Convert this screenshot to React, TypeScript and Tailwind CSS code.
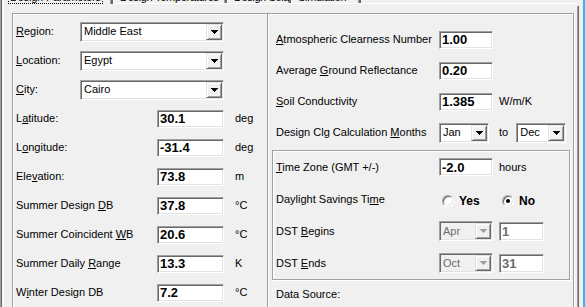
import React from "react";

const sunken =
  "border border-t-[#a0a0a0] border-l-[#a0a0a0] border-b-white border-r-white shadow-[inset_1px_1px_0_#696969,inset_-1px_-1px_0_#e3e3e3]";
const raised =
  "border border-t-[#e3e3e3] border-l-[#e3e3e3] border-b-[#696969] border-r-[#696969] shadow-[inset_1px_1px_0_#fff,inset_-1px_-1px_0_#a0a0a0]";
const tab =
  "shrink-0 overflow-hidden flex items-end border-l border-white border-r-2 border-r-[#696969] shadow-[inset_-1px_0_0_#a0a0a0]";

function Arrow({ disabled }: { disabled?: boolean }) {
  return (
    <svg width="7" height="4" viewBox="0 0 7 4" shapeRendering="crispEdges">
      <path d="M0 0H7V1H6V2H5V3H4V4H3V3H2V2H1V1H0Z" fill={disabled ? "#a0a0a0" : "#000"} />
    </svg>
  );
}

function Combo({ value, className, disabled }: { value: string; className: string; disabled?: boolean }) {
  return (
    <div
      className={`${sunken} ${className} h-[20px] flex items-center justify-between pl-[3px] pr-px ${
        disabled ? "bg-[#f0f0f0] text-[#6d6d6d]" : "bg-white"
      }`}
    >
      <span className="leading-none">{value}</span>
      <div className={`${raised} w-[16px] h-[16px] bg-[#f0f0f0] flex items-center justify-center`}>
        <Arrow disabled={disabled} />
      </div>
    </div>
  );
}

function Field({ value, className, disabled }: { value: string; className: string; disabled?: boolean }) {
  return (
    <div
      className={`${sunken} ${className} h-[18px] bg-white flex items-center pl-[2px] font-bold text-[13px] leading-none ${
        disabled ? "text-[#6d6d6d]" : "text-black"
      }`}
    >
      {value}
    </div>
  );
}

function Radio({ checked, label }: { checked?: boolean; label: string }) {
  return (
    <div className="w-[60px] flex items-center gap-[5px]">
      <div className="w-[12px] h-[12px] rounded-full bg-white border border-t-[#a0a0a0] border-l-[#a0a0a0] border-b-white border-r-white shadow-[inset_1px_1px_0_#696969,inset_-1px_-1px_0_#e3e3e3] flex items-center justify-center">
        {checked && <div className="w-[4px] h-[4px] rounded-full bg-black" />}
      </div>
      <span className="font-bold text-[12px]">{label}</span>
    </div>
  );
}

const U = ({ children }: { children: React.ReactNode }) => (
  <span className="underline underline-offset-1">{children}</span>
);

const leftCombos = [
  { label: <><U>R</U>egion:</>, value: "Middle East" },
  { label: <><U>L</U>ocation:</>, value: "Egypt" },
  { label: <><U>C</U>ity:</>, value: "Cairo" },
];

const leftFields = [
  { label: <>L<U>a</U>titude:</>, value: "30.1", unit: "deg" },
  { label: <>L<U>o</U>ngitude:</>, value: "-31.4", unit: "deg" },
  { label: <>Ele<U>v</U>ation:</>, value: "73.8", unit: "m" },
  { label: <>Summer Design <U>D</U>B</>, value: "37.8", unit: "°C" },
  { label: <>Summer Coincident <U>W</U>B</>, value: "20.6", unit: "°C" },
  { label: <>Summer Daily <U>R</U>ange</>, value: "13.3", unit: "K" },
  { label: <>W<U>i</U>nter Design DB</>, value: "7.2", unit: "°C" },
];

export default function App() {
  return (
    <div className="w-[585px] h-[307px] overflow-hidden bg-[#f0f0f0] flex font-['Liberation_Sans',Arial,sans-serif] text-[11px] text-black">
      {/* left edge of the window behind */}
      <div className="w-[3px] flex">
        <div className="w-px bg-[#a0a0a0]" />
        <div className="w-px bg-[#696969]" />
        <div className="w-px bg-[#f0f0f0]" />
      </div>

      <div className="w-[574px] flex flex-col">
        {/* tab strip, cut off at the top */}
        <div className="h-[7px] flex overflow-hidden">
          <div className={`${tab} w-[110px] pl-[4px]`}>
            <div className="border border-dotted border-black px-px leading-[11px] whitespace-nowrap tracking-[-0.2px]">
              Design Parameters
            </div>
          </div>
          <div className="flex-1 flex border-b border-white">
            <div className={`${tab} w-[114px] pl-[6px]`}>
              <div className="leading-[11px] whitespace-nowrap tracking-[-0.3px]">Design Temperatures</div>
            </div>
            <div className={`${tab} w-[64px] pl-[6px]`}>
              <div className="leading-[11px] whitespace-nowrap tracking-[-0.4px]">Design Solar</div>
            </div>
            <div className={`${tab} w-[70px] pl-[6px]`}>
              <div className="leading-[11px] whitespace-nowrap tracking-[-0.3px]">Simulation</div>
            </div>
          </div>
        </div>

        {/* page */}
        <div className="flex-1 flex border-l border-white pt-[9px] pl-[8px]">
          {/* left group */}
          <div className="w-[256px] border-l border-t border-r border-[#a0a0a0] shadow-[inset_1px_1px_0_#fff,1px_0_0_#fff] pt-[3px] pl-[3px] flex flex-col">
            {leftCombos.map((r, i) => (
              <div key={i} className="h-[29px] flex items-center">
                <div className="w-[64px]">{r.label}</div>
                <Combo value={r.value} className="w-[144px]" />
              </div>
            ))}
            {leftFields.map((r, i) => (
              <div key={i} className="h-[29px] flex items-center">
                <div className="w-[141px]">{r.label}</div>
                <Field value={r.value} className="w-[67px]" />
                <div className="ml-[11px]">{r.unit}</div>
              </div>
            ))}
          </div>

          {/* right group */}
          <div className="w-[306px] border-t border-r border-[#a0a0a0] shadow-[inset_0_1px_0_#fff,1px_0_0_#fff] pt-[10px] flex flex-col">
            <div className="pl-[8px] flex flex-col">
              <div className="h-[31px] flex items-center">
                <div className="w-[163px]"><U>A</U>tmospheric Clearness Number</div>
                <Field value="1.00" className="w-[54px]" />
              </div>
              <div className="h-[31px] flex items-center">
                <div className="w-[163px]">Average <U>G</U>round Reflectance</div>
                <Field value="0.20" className="w-[54px]" />
              </div>
              <div className="h-[31px] flex items-center">
                <div className="w-[163px]"><U>S</U>oil Conductivity</div>
                <Field value="1.385" className="w-[54px]" />
                <div className="ml-[6px]">W/m/K</div>
              </div>
              <div className="h-[31px] flex items-center">
                <div className="w-[163px]">Design Clg Calculation <U>M</U>onths</div>
                <Combo value="Jan" className="w-[50px]" />
                <div className="ml-[10px]">to</div>
                <Combo value="Dec" className="w-[50px] ml-[8px]" />
              </div>
            </div>

            {/* time zone group */}
            <div className="mt-[2px] ml-[4px] mr-[3px] border border-[#a0a0a0] shadow-[inset_1px_1px_0_#fff,1px_1px_0_#fff] pl-[3px] flex flex-col">
              <div className="h-[32px] flex items-center">
                <div className="w-[163px]"><U>T</U>ime Zone (GMT +/-)</div>
                <Field value="-2.0" className="w-[54px]" />
                <div className="ml-[6px]">hours</div>
              </div>
              <div className="h-[32px] flex items-center">
                <div className="w-[163px]">Daylight Savings Ti<U>m</U>e</div>
                <div className="ml-[3px] mt-[3px] flex items-center">
                  <Radio label="Yes" />
                  <Radio label="No" checked />
                </div>
              </div>
              <div className="h-[32px] flex items-center">
                <div className="w-[163px]">DST <U>B</U>egins</div>
                <Combo value="Apr" className="w-[54px]" disabled />
                <Field value="1" className="w-[45px] ml-[6px] h-[19px]" disabled />
              </div>
              <div className="h-[32px] flex items-center">
                <div className="w-[163px]">DST <U>E</U>nds</div>
                <Combo value="Oct" className="w-[54px]" disabled />
                <Field value="31" className="w-[45px] ml-[6px] h-[19px]" disabled />
              </div>
            </div>

            <div className="h-[26px] mt-px pl-[8px] flex items-center">Data Source:</div>
          </div>
        </div>
      </div>

      {/* right edge */}
      <div className="w-[2px] flex pt-[6px]">
        <div className="w-px bg-[#a0a0a0]" />
        <div className="w-px bg-[#696969]" />
      </div>
      <div className="w-[4px]" />
      <div className="w-[2px] bg-[#3db4e9]" />
    </div>
  );
}
